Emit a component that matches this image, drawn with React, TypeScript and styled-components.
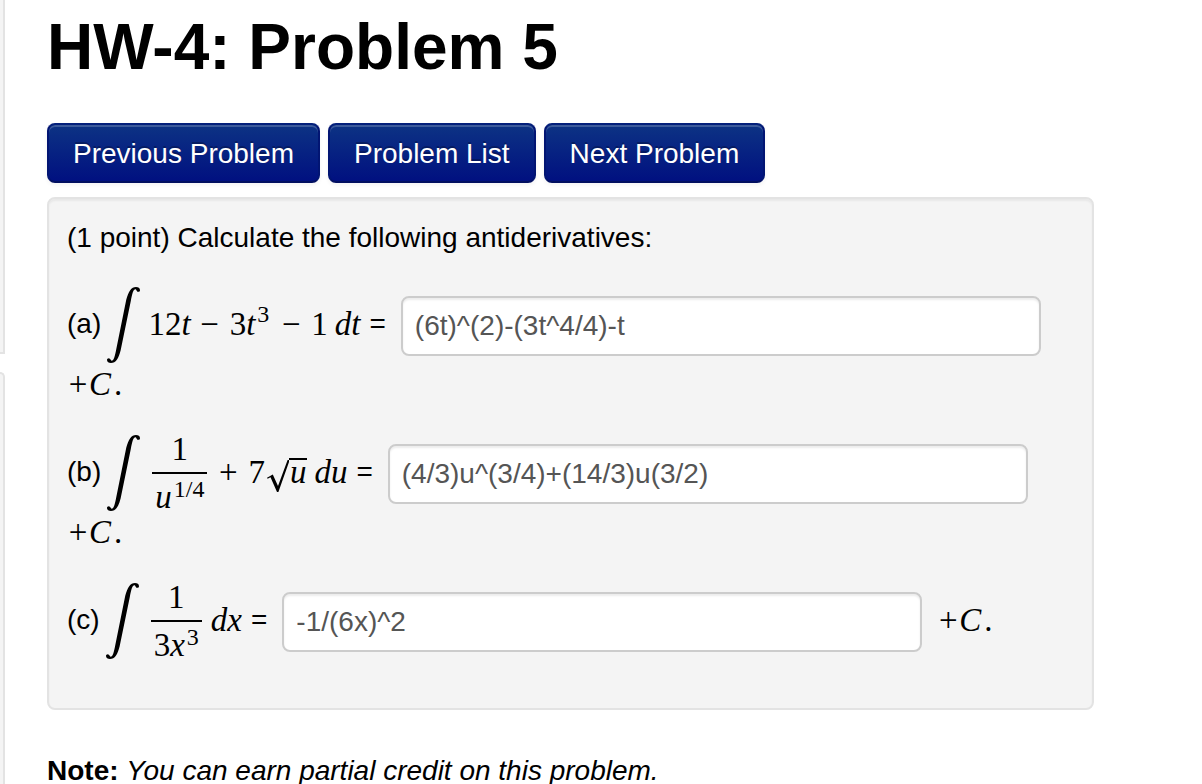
import React from "react";
import styled, { createGlobalStyle } from "styled-components";

const GlobalStyle = createGlobalStyle`
  *, *::before, *::after { box-sizing: border-box; }
  body {
    margin: 0;
    background: #fff;
    color: #000;
    font-family: "Liberation Sans", Arial, sans-serif;
    font-size: 28px;
    line-height: 40px;
  }
`;

const Page = styled.div`
  display: grid;
  grid-template-columns: 5px minmax(0, 1fr);
`;

const Sidebar = styled.aside`
  display: grid;
  grid-template-rows: 354px 1fr;
  gap: 18px;
`;

const SidebarPanel = styled.div<{ $rounded?: boolean }>`
  background: #f4f4f4;
  border-right: 2px solid #e3e3e3;
  border-bottom: ${(p) => (p.$rounded ? "0" : "2px solid #e3e3e3")};
  border-top: ${(p) => (p.$rounded ? "2px solid #e3e3e3" : "0")};
  border-top-right-radius: ${(p) => (p.$rounded ? "8px" : "0")};
`;

const Main = styled.main`
  padding: 7px 9vw 0 42px;
`;

const Title = styled.h1`
  margin: 0 0 36px;
  font-size: 64px;
  line-height: 80px;
  font-weight: bold;
`;

const ButtonBar = styled.nav`
  display: flex;
  gap: 8px;
  margin-bottom: 14px;
`;

const NavButton = styled.button`
  height: 60px;
  padding: 2px 24px 0;
  border: 2px solid;
  border-color: #04207b #021573 #021060;
  border-radius: 8px;
  background: linear-gradient(#0d3484, #000f80);
  background-origin: border-box;
  box-shadow: inset 0 2px 0 rgba(255, 255, 255, 0.2), 0 2px 4px rgba(0, 0, 0, 0.05);
  color: #fff;
  font: inherit;
  text-shadow: 0 -2px 0 rgba(0, 0, 0, 0.25);
  white-space: nowrap;
`;

const ProblemPanel = styled.section`
  padding: 19px 18px 49px;
  border: 2px solid #e3e3e3;
  border-radius: 8px;
  background: #f4f4f4;
  box-shadow: inset 0 2px 2px rgba(0, 0, 0, 0.05);
`;

const Prompt = styled.p`
  margin: 0 0 29px;
`;

const Parts = styled.div`
  display: flex;
  flex-direction: column;
  gap: 28px;
`;

const Part = styled.div`
  display: flex;
  flex-wrap: wrap;
  align-items: center;
  column-gap: 15px;
`;

const Question = styled.label`
  display: flex;
  align-items: center;
  height: 76px;
  white-space: pre;
`;

const PlainText = styled.span`
  padding-bottom: 2px;
`;

const Formula = styled.span`
  padding-bottom: 2px;
  font-family: "Liberation Serif", "Times New Roman", serif;
  font-size: 33px;
`;

const Operator = styled.span<{ $tight?: boolean }>`
  display: inline-block;
  width: 22px;
  margin: ${(p) => (p.$tight ? "0" : "0 9px 0 8px")};
  text-align: center;
`;

const Differential = styled.i`
  margin: 0 9px 0 7px;
`;

const Power = styled.sup<{ $low?: boolean }>`
  display: inline-block;
  margin: 0 3px 0 2px;
  font-size: 24px;
  line-height: 0;
  vertical-align: ${(p) => (p.$low ? "11px" : "13px")};
`;

const Fraction = styled.span`
  display: flex;
  flex-direction: column;
  text-align: center;
  margin: 0 2px 0 12px;
  font-family: "Liberation Serif", "Times New Roman", serif;
  font-size: 33px;
`;

const Numerator = styled.span`
  padding-bottom: 9px;
  line-height: 28px;
`;

const Denominator = styled.span`
  padding: 10px 0 0 3px;
  border-top: 2px solid #000;
  line-height: 27px;
`;

const IntegralDrawing = styled.svg`
  flex: none;
  margin: 0 0 0 6px;
`;

const Radicand = styled.span`
  display: inline-block;
  height: 26px;
  padding: 0 1px;
  border-top: 2px solid #000;
  line-height: 24px;
`;

const RadicalDrawing = styled.svg`
  margin-left: 2px;
  vertical-align: -10px;
`;

const Answer = styled.input`
  flex: none;
  width: 640px;
  max-width: 100%;
  height: 60px;
  margin: 2px 0 0;
  padding: 0 12px;
  border: 2px solid #ccc;
  border-radius: 8px;
  background: #fff;
  box-shadow: inset 0 2px 2px rgba(0, 0, 0, 0.075);
  color: #555;
  font: inherit;
`;

const Constant = styled(Formula)`
  height: 44px;
  padding: 1px 0 0;
`;

const ConstantName = styled.i`
  margin-right: 3px;
`;

const Note = styled.p`
  margin: 41px 0 0;
`;

const Integral = () => (
  <IntegralDrawing width="33" height="76" viewBox="0 0 33 76" aria-label="integral">
    <path d="M33 3.2C33 1.2 31.3 0 29 0C24.2 0 21.6 4.5 19.3 12.5L9.3 62C7.8 69.6 6.8 73.8 4.6 73.8C3.8 73.8 3.5 71.3 1.8 71.3C.7 71.3 0 72 0 73C0 75 1.7 76 4 76C8.9 76 11.6 71.5 13.6 63.5L23.8 14C25.3 6.4 26.2 2.2 28.5 2.2C29.5 2.2 29.4 4.8 31.2 4.8C32.3 4.8 33 4.2 33 3.2Z" />
  </IntegralDrawing>
);

const Radical = () => (
  <RadicalDrawing width="22" height="33" viewBox="0 0 22 33" aria-label="square root">
    <path d="M0 17.8L5.8 14.5L11 26L20.6 0H22V2L11.4 32H10L3.5 17.2L.6 18.8Z" />
  </RadicalDrawing>
);

const PlusC = () => (
  <Constant>
    <Operator $tight>+</Operator>
    <ConstantName>C</ConstantName>.
  </Constant>
);

export default function App() {
  return (
    <>
      <GlobalStyle />
      <Page>
        <Sidebar>
          <SidebarPanel />
          <SidebarPanel $rounded />
        </Sidebar>
        <Main>
          <Title>HW-4: Problem 5</Title>
          <ButtonBar>
            <NavButton type="button">Previous Problem</NavButton>
            <NavButton type="button">Problem List</NavButton>
            <NavButton type="button">Next Problem</NavButton>
          </ButtonBar>
          <ProblemPanel>
            <Prompt>(1 point) Calculate the following antiderivatives:</Prompt>
            <Parts>
              <Part>
                <Question htmlFor="answer-a">
                  <PlainText>(a)</PlainText>
                  <Integral />
                  <Formula>
                    {" "}12<i>t</i>
                    <Operator>−</Operator>3<i>t</i>
                    <Power>3</Power>
                    <Operator>−</Operator>1
                    <Differential>dt</Differential>
                  </Formula>
                  <PlainText>=</PlainText>
                </Question>
                <Answer id="answer-a" type="text" defaultValue="(6t)^(2)-(3t^4/4)-t" />
                <PlusC />
              </Part>
              <Part>
                <Question htmlFor="answer-b">
                  <PlainText>(b)</PlainText>
                  <Integral />
                  <Fraction>
                    <Numerator>1</Numerator>
                    <Denominator>
                      <i>u</i>
                      <Power $low>1/4</Power>
                    </Denominator>
                  </Fraction>
                  <Formula>
                    <Operator>+</Operator>7
                    <Radical />
                    <Radicand>
                      <i>u</i>
                    </Radicand>
                    <Differential>du</Differential>
                  </Formula>
                  <PlainText>=</PlainText>
                </Question>
                <Answer id="answer-b" type="text" defaultValue="(4/3)u^(3/4)+(14/3)u(3/2)" />
                <PlusC />
              </Part>
              <Part>
                <Question htmlFor="answer-c">
                  <PlainText>(c)</PlainText>
                  <Integral />
                  <Fraction>
                    <Numerator>1</Numerator>
                    <Denominator>
                      3<i>x</i>
                      <Power $low>3</Power>
                    </Denominator>
                  </Fraction>
                  <Formula>
                    <Differential>dx</Differential>
                  </Formula>
                  <PlainText>=</PlainText>
                </Question>
                <Answer id="answer-c" type="text" defaultValue="-1/(6x)^2" />
                <PlusC />
              </Part>
            </Parts>
          </ProblemPanel>
          <Note>
            <strong>Note:</strong> <em>You can earn partial credit on this problem.</em>
          </Note>
        </Main>
      </Page>
    </>
  );
}
